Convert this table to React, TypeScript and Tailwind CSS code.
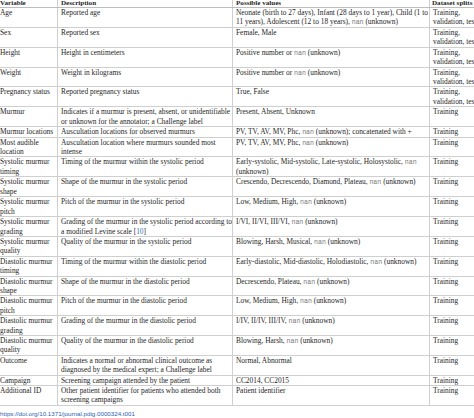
import React from 'react';

type Row = { v: string[]; d: string[]; p: string[]; s: string[] };

const TVT = ['Training,', 'validation, test'];
const TR = ['Training'];

// each cell is a list of lines, wrapped the way the source table wraps
const rows: Row[] = [
  { v: ['Age'], d: ['Reported age'], p: ['Neonate (birth to 27 days), Infant (28 days to 1 year), Child (1 to', '11 years), Adolescent (12 to 18 years), nan (unknown)'], s: TVT },
  { v: ['Sex'], d: ['Reported sex'], p: ['Female, Male'], s: TVT },
  { v: ['Height'], d: ['Height in centimeters'], p: ['Positive number or nan (unknown)'], s: TVT },
  { v: ['Weight'], d: ['Weight in kilograms'], p: ['Positive number or nan (unknown)'], s: TVT },
  { v: ['Pregnancy status'], d: ['Reported pregnancy status'], p: ['True, False'], s: TVT },
  { v: ['Murmur'], d: ['Indicates if a murmur is present, absent, or unidentifiable', 'or unknown for the annotator; a Challenge label'], p: ['Present, Absent, Unknown'], s: TR },
  { v: ['Murmur locations'], d: ['Auscultation locations for observed murmurs'], p: ['PV, TV, AV, MV, Phc, nan (unknown); concatenated with +'], s: TR },
  { v: ['Most audible', 'location'], d: ['Auscultation location where murmurs sounded most', 'intense'], p: ['PV, TV, AV, MV, Phc, nan (unknown)'], s: TR },
  { v: ['Systolic murmur', 'timing'], d: ['Timing of the murmur within the systolic period'], p: ['Early-systolic, Mid-systolic, Late-systolic, Holosystolic, nan', '(unknown)'], s: TR },
  { v: ['Systolic murmur', 'shape'], d: ['Shape of the murmur in the systolic period'], p: ['Crescendo, Decrescendo, Diamond, Plateau, nan (unknown)'], s: TR },
  { v: ['Systolic murmur', 'pitch'], d: ['Pitch of the murmur in the systolic period'], p: ['Low, Medium, High, nan (unknown)'], s: TR },
  { v: ['Systolic murmur', 'grading'], d: ['Grading of the murmur in the systolic period according to', 'a modified Levine scale [10]'], p: ['I/VI, II/VI, III/VI, nan (unknown)'], s: TR },
  { v: ['Systolic murmur', 'quality'], d: ['Quality of the murmur in the systolic period'], p: ['Blowing, Harsh, Musical, nan (unknown)'], s: TR },
  { v: ['Diastolic murmur', 'timing'], d: ['Timing of the murmur within the diastolic period'], p: ['Early-diastolic, Mid-diastolic, Holodiastolic, nan (unknown)'], s: TR },
  { v: ['Diastolic murmur', 'shape'], d: ['Shape of the murmur in the diastolic period'], p: ['Decrescendo, Plateau, nan (unknown)'], s: TR },
  { v: ['Diastolic murmur', 'pitch'], d: ['Pitch of the murmur in the diastolic period'], p: ['Low, Medium, High, nan (unknown)'], s: TR },
  { v: ['Diastolic murmur', 'grading'], d: ['Grading of the murmur in the diastolic period'], p: ['I/IV, II/IV, III/IV, nan (unknown)'], s: TR },
  { v: ['Diastolic murmur', 'quality'], d: ['Quality of the murmur in the diastolic period'], p: ['Blowing, Harsh, nan (unknown)'], s: TR },
  { v: ['Outcome'], d: ['Indicates a normal or abnormal clinical outcome as', 'diagnosed by the medical expert; a Challenge label'], p: ['Normal, Abnormal'], s: TR },
  { v: ['Campaign'], d: ['Screening campaign attended by the patient'], p: ['CC2014, CC2015'], s: TR },
  { v: ['Additional ID'], d: ['Other patient identifier for patients who attended both', 'screening campaigns'], p: ['Patient identifier'], s: TR },
];

const Line: React.FC<{ text: string }> = ({ text }) => {
  const parts = text.split(/(\bnan\b|\[10\])/);
  return (
    <div className="whitespace-pre">
      {parts.map((p, i) =>
        p === 'nan' ? (
          <span key={i} className="font-['Liberation_Mono',monospace] text-[6.6px] leading-none text-[#7a7a7a]">nan</span>
        ) : p === '[10]' ? (
          <span key={i}>[<span className="text-[#3b6fb0]">10</span>]</span>
        ) : (
          <span key={i}>{p}</span>
        )
      )}
    </div>
  );
};

const Cell: React.FC<{ lines: string[]; first?: boolean }> = ({ lines, first }) => (
  <div className={first ? 'overflow-hidden' : 'overflow-hidden border-l border-[#cfcfcf] pl-[3px]'}>
    {lines.map((l, i) => <Line key={i} text={l} />)}
  </div>
);

const cols = 'grid grid-cols-[57px_175px_197px_80px]';

export default function App() {
  return (
    <div className="w-[474px] h-[418px] overflow-hidden bg-white text-[#262626] font-['Liberation_Serif',serif] text-[7.4px] leading-[9.4px]">
      <div className={`${cols} h-[8px] font-bold text-[7.1px] leading-[7px] border-b border-[#bdbdbd]`}>
        <div>Variable</div>
        <div className="border-l border-[#cfcfcf] pl-[3px]">Description</div>
        <div className="border-l border-[#cfcfcf] pl-[3px]">Possible values</div>
        <div className="border-l border-[#cfcfcf] pl-[2px]">Dataset splits</div>
      </div>
      {rows.map((r, i) => (
        <div key={i} className={`${cols} border-b border-[#cfcfcf]`}>
          <Cell lines={r.v} first />
          <Cell lines={r.d} />
          <Cell lines={r.p} />
          <Cell lines={r.s} />
        </div>
      ))}
      <div className="mt-[4px] font-['Liberation_Sans',sans-serif] text-[6.2px] leading-[8px] text-[#2a62b8]">
        https://doi.org/10.1371/journal.pdig.0000324.t001
      </div>
    </div>
  );
}
